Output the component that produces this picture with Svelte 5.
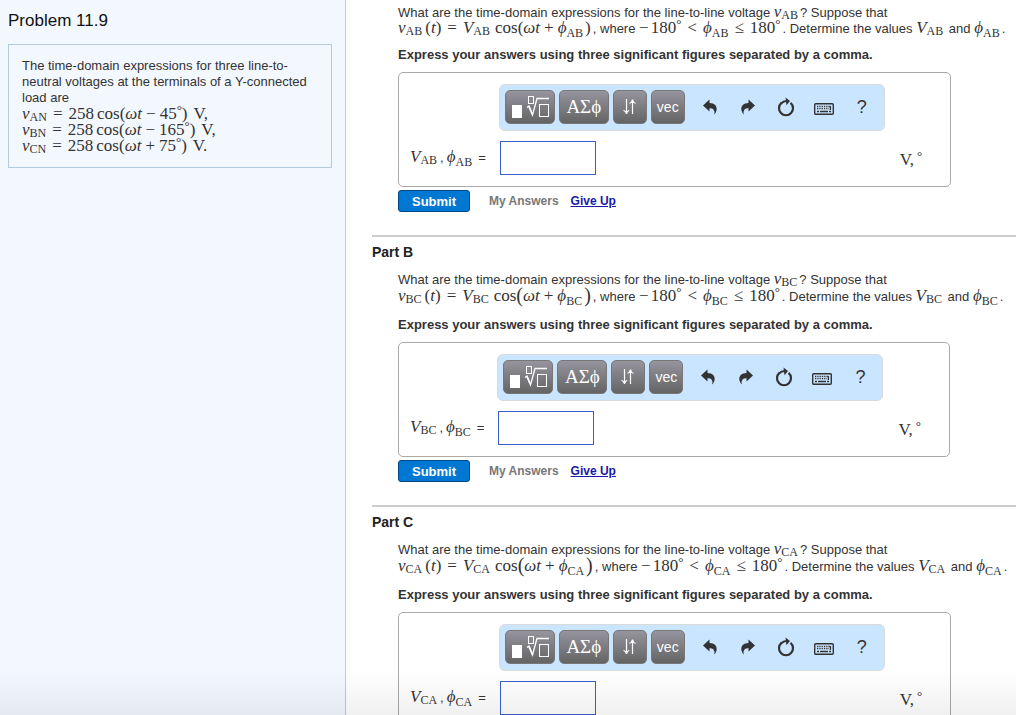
<script>
  const givens = [
    { sub: 'AN', sign: '−', angle: '45', end: ',' },
    { sub: 'BN', sign: '−', angle: '165', end: ',' },
    { sub: 'CN', sign: '+', angle: '75', end: '.' },
  ];
  const parts = [
    { id: 'a', title: '', sub: 'AB' },
    { id: 'b', title: 'Part B', sub: 'BC' },
    { id: 'c', title: 'Part C', sub: 'CA' },
  ];
  const answers = $state({ a: '', b: '', c: '' });
</script>

{#snippet sym(letter, sub)}<span class="math"><i>{letter}</i><sub class:deep={letter === 'ϕ'}>{sub}</sub></span>{/snippet}

<div class="page">
  <aside>
    <h1>Problem 11.9</h1>
    <div class="given">
      The time-domain expressions for three line-to-neutral voltages at the terminals of a Y-connected load are
      {#each givens as g}
        <div class="math row">{@render sym('v', g.sub)}<span class="rel">=</span>258<span class="fn">cos</span>(<i>ωt</i><span class="bin">{g.sign}</span>{g.angle}<sup>°</sup>)<span class="unit">V</span>{g.end}</div>
      {/each}
    </div>
  </aside>

  <main>
    {#each parts as part (part.id)}
      <section>
        {#if part.title}<h2>{part.title}</h2>{/if}
        <div class="body">
          <p>What are the time-domain expressions for the line-to-line voltage {@render sym('v', part.sub)}<span class="after">?</span> Suppose that</p>
          <p class="formula" class:tall={part.title}>
            <span class="math">{@render sym('v', part.sub)}<span class="arg">(<i>t</i>)</span><span class="rel">=</span>{@render sym('V', part.sub)}<span class="fn wide">cos</span><span class:big={part.title}>(</span><i>ωt</i><span class="bin">+</span>{@render sym('ϕ', part.sub)}<span class="close" class:big={part.title}>)</span></span><span class="after">,</span> where <span class="math"><span class="neg">−</span>180<sup>°</sup><span class="rel">&lt;</span>{@render sym('ϕ', part.sub)}<span class="rel">≤</span>180<sup>°</sup></span><span class="after">.</span> Determine the values {@render sym('V', part.sub)} <span class="after">and</span> {@render sym('ϕ', part.sub)}<span class="after">.</span>
          </p>
          <p class="express">Express your answers using three significant figures separated by a comma.</p>

          <div class="answer">
            <div class="toolbar" role="toolbar" aria-label="Equation tools">
              <button class="key wide" aria-label="Templates">
                <svg width="40" height="24" viewBox="0 0 40 24" fill="none" stroke="#fff">
                  <rect x="2" y="10" width="10" height="13" fill="#fff" stroke="none" />
                  <rect x="18.500" y="1.500" width="5" height="7" />
                  <path d="M17 12.500l2-1.500 3.500 9L27 3.500h12" stroke-width="1.300" />
                  <path d="M19 11.500l3.500 8" stroke-width="1.600" />
                  <rect x="29.500" y="9.500" width="9" height="12" />
                </svg>
              </button>
              <button class="key wide greek">ΑΣϕ</button>
              <button class="key" aria-label="Arrows">
                <svg width="16" height="18" viewBox="0 0 16 18" fill="none" stroke="#fff" stroke-width="1.200">
                  <path d="M4.500 1v14.500M1.500 12.200Q4 13 4.500 16M7.200 12.200Q5 13 4.500 16M10.500 16V2M7.500 5.500Q10 4.500 10.500 1.500M13.500 5.500Q11 4.500 10.500 1.500" />
                </svg>
              </button>
              <button class="key">vec</button>
              <div class="icons">
                <button aria-label="Undo">
                  <svg width="16" height="18" viewBox="0 0 16 18" fill="#333"><path d="M1 7.500L7.500 1.500V5C12.500 5 15.500 8 14.500 12.500Q14 15 12 16.500Q13 13 11.500 11.500Q10.200 10 7.500 10.200V13.500Z" /></svg>
                </button>
                <button aria-label="Redo">
                  <svg width="16" height="18" viewBox="0 0 16 18" fill="#333"><path d="M15 7.500L8.500 1.500V5C3.500 5 .5 8 1.500 12.500Q2 15 4 16.500Q3 13 4.500 11.500Q5.800 10 8.500 10.200V13.500Z" /></svg>
                </button>
                <button aria-label="Reset">
                  <svg width="18" height="20" viewBox="0 0 18 20"><path d="M4.500 5.900A7 7 0 1 0 13.500 5.900" fill="none" stroke="#333" stroke-width="2.200" /><path d="M4 6.500Q6.500 4 9.500 4" fill="none" stroke="#333" stroke-width="2.200" /><path d="M8.500 .5L13 4L9.500 8.200Z" fill="#333" /></svg>
                </button>
                <button class="low" aria-label="Keyboard">
                  <svg width="20" height="12" viewBox="0 0 20 12" fill="none" stroke="#333"><rect x=".7" y=".7" width="18.600" height="10.600" rx="1" stroke-width="1.400" /><path d="M3 3.500h14M3 5.700h12" stroke-width="1.300" stroke-dasharray="1.300 1" /><path d="M3 8.500h2M6 8.500h8M15 8.500h2M16.400 3v4" stroke-width="1.300" /></svg>
                </button>
                <button class="help" aria-label="Help">?</button>
              </div>
            </div>
            <label for="answer-{part.id}">{@render sym('V', part.sub)}<span class="comma">,</span>{@render sym('ϕ', part.sub)}<span class="eq">=</span></label>
            <input id="answer-{part.id}" type="text" bind:value={answers[part.id]} />
            <span class="units math">V,<sup>°</sup></span>
          </div>

          <div class="actions">
            <button class="submit">Submit</button>
            <span class="mine">My Answers</span>
            <a href="#give-up">Give Up</a>
          </div>
        </div>
      </section>
    {/each}
  </main>
</div>

<style>
  :global(body) { margin: 0; background: #fff; }
  .page {
    position: relative;
    display: grid;
    grid-template-columns: 346px minmax(0, 1fr);
    height: 100vh;
    overflow: hidden;
    font: 13px/16px "Liberation Sans", Arial, sans-serif;
    color: #333;
  }
  .page::after {
    content: "";
    position: absolute;
    inset: auto 0 0 0;
    height: 44px;
    background: linear-gradient(rgba(0, 0, 0, 0), rgba(0, 0, 0, 0.06));
    pointer-events: none;
  }
  aside {
    box-sizing: border-box;
    padding: 11px 13px 0 8px;
    background: #f3f8ff;
    border-right: 1px solid #b9cbd9;
  }
  h1 { margin: 0 0 13px; font-size: 17px; line-height: 20px; font-weight: 400; color: #111; }
  .given { padding: 13px; border: 1px solid #b3cbde; }

  .math { font-family: "Liberation Serif", "Times New Roman", serif; font-size: 17px; line-height: 0; white-space: nowrap; }
  .row { height: 16px; line-height: 16px; }
  sub, sup { line-height: 0; }
  sub { font-size: 12px; vertical-align: -2px; }
  sub.deep { vertical-align: -4px; }
  sup { font-size: 13px; vertical-align: 5px; }
  .rel { margin: 0 6px; }
  .bin { margin: 0 4px; }
  .fn { margin-left: 3px; }
  .fn.wide { margin-left: 5px; }
  .arg { margin-left: 3px; }
  .unit { margin-left: 6px; }
  .neg { margin-right: 2px; }
  .close, .after { margin-left: 2px; }
  .big { font-size: 20px; line-height: 0; vertical-align: -1px; }

  main { overflow: auto; scrollbar-width: none; padding: 5px 0 0 26px; }
  h2 { margin: 0 0 12px; padding-top: 7px; border-top: 2px solid #ccc; font-size: 14px; line-height: 16px; color: #222; }
  .body { padding: 0 0 23px 26px; }
  p { margin: 0; height: 16px; white-space: nowrap; }
  .formula { line-height: 15px; height: 15px; }
  .formula.tall { line-height: 18px; height: 18px; }
  .express { margin: 11px 0 9px; font-weight: 700; }

  .answer {
    box-sizing: border-box;
    display: grid;
    grid-template-columns: auto auto auto;
    width: max-content;
    row-gap: 10px;
    padding: 11px 28px 11px 11px;
    border: 1px solid #aaa;
    border-radius: 5px;
  }
  .toolbar {
    grid-column: 2;
    display: flex;
    gap: 4px;
    box-sizing: border-box;
    height: 47px;
    padding: 5px 3px 0 5px;
    border: 1px solid #dadada;
    border-radius: 6px;
    background: #cae5ff;
  }
  button { font-family: inherit; }
  .key {
    display: flex;
    align-items: center;
    justify-content: center;
    box-sizing: border-box;
    width: 34px;
    height: 34px;
    padding: 0;
    border: 1px solid #777;
    border-radius: 5px;
    background: linear-gradient(#96949d, #646464);
    color: #fff;
    font-size: 14px;
  }
  .key.wide { width: 50px; }
  .greek { font-family: "Liberation Serif", serif; font-size: 19px; }
  .icons { display: flex; margin-left: 2px; }
  .icons button {
    display: flex;
    align-items: center;
    justify-content: center;
    width: 38px;
    height: 34px;
    padding: 0;
    border: 0;
    background: none;
    color: #333;
  }
  .icons .low { padding-top: 4px; }
  .icons .help { font-size: 18px; }
  label { grid-column: 1; align-self: center; padding-right: 13px; white-space: nowrap; }
  .comma { margin: 0 3px; }
  .eq { margin-left: 6px; }
  input {
    box-sizing: border-box;
    width: 96px;
    height: 34px;
    margin-left: 1px;
    padding: 4px;
    border: 1px solid #3a5fcd;
    background: #fff;
    font: inherit;
  }
  .units { grid-column: 3; align-self: center; padding-left: 15px; }
  .units sup { margin-left: 3px; }

  .actions { display: flex; align-items: center; margin-top: 3px; font-size: 12px; font-weight: 700; }
  .submit {
    box-sizing: border-box;
    width: 72px;
    height: 22px;
    padding: 0;
    border: 1px solid #004b87;
    border-radius: 3px;
    background: #0077d2;
    color: #fff;
    font-size: 13px;
    font-weight: 700;
  }
  .mine { margin: 0 12px 0 19px; color: #777; }
  a { color: #1a1aa6; }
</style>
